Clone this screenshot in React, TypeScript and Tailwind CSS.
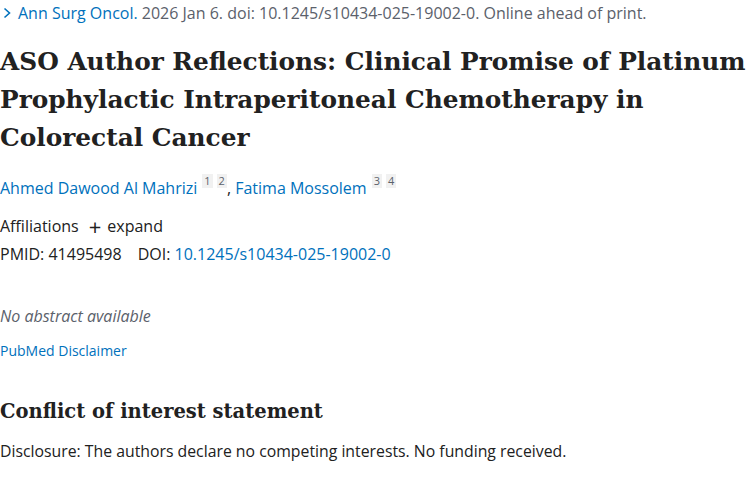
export default function App() {
  const sans = { fontFamily: '"Open Sans", "Noto Sans", sans-serif' };
  const serif = { fontFamily: '"DejaVu Serif", serif' };
  const badge = "bg-[#f1f1f1] text-[#5b616b] text-[11px] leading-[14px] px-[2px]";
  return (
    <div className="w-[750px] h-[500px] overflow-hidden bg-white text-[#212121]" style={sans}>
      <div className="flex items-center gap-[6px] pt-[2px] text-[16px] leading-[22px] text-[#5b616b] whitespace-nowrap">
        <svg width="10" height="12" viewBox="0 0 10 12" className="ml-[2px]">
          <path d="M2.5 1.5 L7.5 6 L2.5 10.5" fill="none" stroke="#0071bc" strokeWidth="1.6" />
        </svg>
        <span><span className="text-[#0071bc]">Ann Surg Oncol.</span> 2026 Jan 6. doi: 10.1245/s10434-025-19002-0. Online ahead of print.</span>
      </div>
      <h1 className="mt-[19px] text-[24.8px] leading-[38px] font-bold text-[#212121] whitespace-nowrap" style={serif}>
        ASO Author Reflections: Clinical Promise of Platinum<br />
        Prophylactic Intraperitoneal Chemotherapy in<br />
        Colorectal Cancer
      </h1>
      <div className="mt-[20px] text-[16px] leading-[22px] flex items-start">
        <span className="text-[#0071bc]">Ahmed Dawood Al Mahrizi</span>
        <span className="ml-[5px] flex gap-[4px] -mt-[3px]">
          <span className={badge}>1</span>
          <span className={badge}>2</span>
        </span>
        <span>,&nbsp;</span>
        <span className="text-[#0071bc]">Fatima Mossolem</span>
        <span className="ml-[5px] flex gap-[4px] -mt-[3px]">
          <span className={badge}>3</span>
          <span className={badge}>4</span>
        </span>
      </div>
      <div className="mt-[16px] flex items-center text-[16px] leading-[22px]">
        <span>Affiliations</span>
        <span className="ml-[10px] mr-[6px] text-[22px] leading-[22px]">+</span>
        <span>expand</span>
      </div>
      <div className="mt-[6px] flex text-[16px] leading-[22px]">
        <span>PMID: 41495498</span>
        <span className="ml-[16px]">DOI: <span className="text-[#0071bc]">10.1245/s10434-025-19002-0</span></span>
      </div>
      <div className="mt-[40px] text-[16px] leading-[22px] italic text-[#5b616b]">No abstract available</div>
      <div className="mt-[15px] text-[14px] leading-[18px] text-[#0071bc]">PubMed Disclaimer</div>
      <h2 className="mt-[38px] text-[19.5px] leading-[28px] font-bold" style={serif}>Conflict of interest statement</h2>
      <div className="mt-[14px] text-[15.8px] leading-[22px]">Disclosure: The authors declare no competing interests. No funding received.</div>
    </div>
  );
}
